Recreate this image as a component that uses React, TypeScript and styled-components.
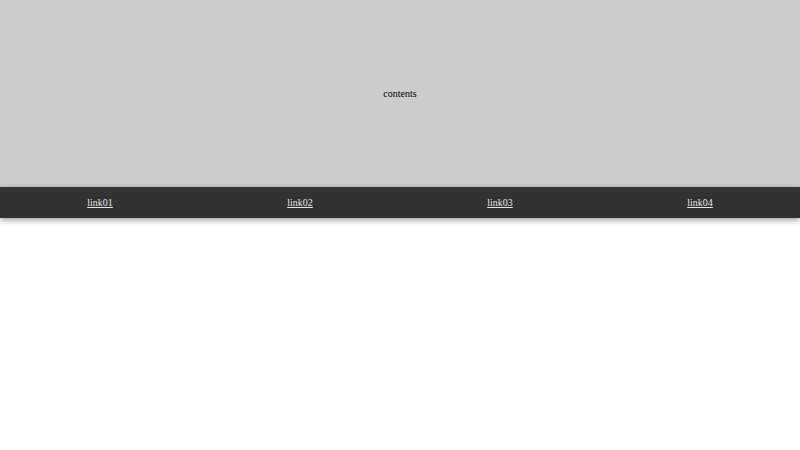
import styled, { createGlobalStyle } from 'styled-components';

const GlobalStyle = createGlobalStyle`
  html, body {
    margin: 0;
    padding: 0;
    background: #fff;
    font-family: 'Liberation Serif', 'Times New Roman', serif;
    font-size: 10px;
  }
  #root {
    min-height: 100vh;
  }
`;

const Contents = styled.div`
  height: 187px;
  background: #ccc;
  color: #000;
  display: flex;
  align-items: center;
  justify-content: center;
`;

const Nav = styled.nav`
  position: relative;
  height: 31px;
  background: #333;
  box-shadow: 0 2px 6px rgba(0, 0, 0, 0.4);
  display: flex;
  align-items: center;
`;

const NavItem = styled.div`
  flex: 1;
  text-align: center;
`;

const NavLink = styled.a`
  color: #e6e6e6;
  text-decoration: underline;
`;

const links = ['link01', 'link02', 'link03', 'link04'];

const App = () => {
  return (
    <>
      <GlobalStyle />
      <Contents>contents</Contents>
      <Nav>
        {links.map((l) => (
          <NavItem key={l}>
            <NavLink href='#'>{l}</NavLink>
          </NavItem>
        ))}
      </Nav>
    </>
  );
};

export default App;
